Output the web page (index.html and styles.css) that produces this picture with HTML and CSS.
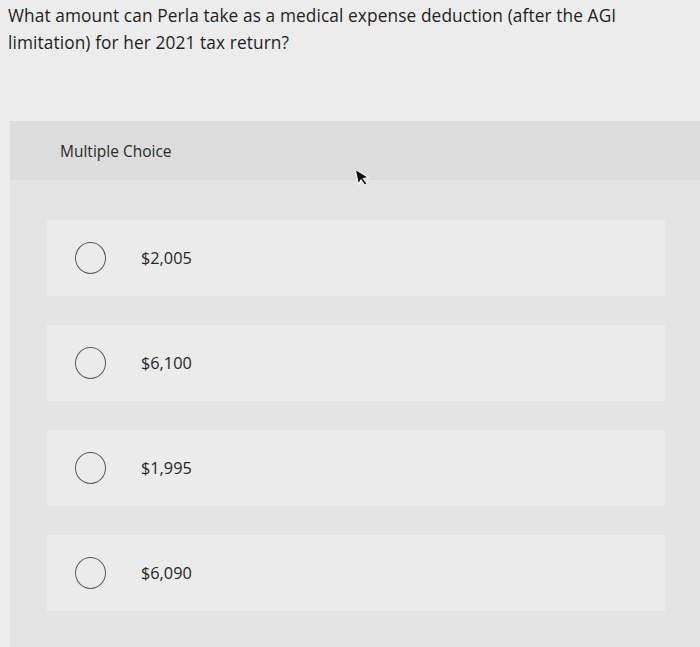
FILE: index.html
```html
<!DOCTYPE html>
<html lang="en">
<head>
<meta charset="utf-8">
<title>Multiple Choice</title>
<link rel="stylesheet" href="styles.css">
</head>
<body>
<p class="question">What amount can Perla take as a medical expense deduction (after the AGI limitation) for her 2021 tax return?</p>
<section class="panel">
  <div class="panel-header">Multiple Choice</div>
  <div class="panel-body">
    <label class="option"><span class="radio"></span><span class="answer">$2,005</span></label>
    <label class="option"><span class="radio"></span><span class="answer">$6,100</span></label>
    <label class="option"><span class="radio"></span><span class="answer">$1,995</span></label>
    <label class="option"><span class="radio"></span><span class="answer">$6,090</span></label>
  </div>
  <svg class="cursor" width="14" height="20" viewBox="0 0 14 20"><path d="M1 1 L1 16 L4.5 12.5 L7 18.5 L9.5 17.5 L7 11.5 L12 11.5 Z" fill="#111" stroke="#fff" stroke-width="1"/></svg>
</section>
</body>
</html>
```
FILE: styles.css
```css
html, body {
  margin: 0;
  padding: 0;
}
body {
  background: #ececec;
  font-family: "Open Sans", "Liberation Sans", sans-serif;
  color: #222;
  width: 700px;
  height: 647px;
  overflow: hidden;
}
.question {
  margin: 0;
  padding: 2px 0 0 8px;
  max-width: 660px;
  font-size: 17.3px;
  font-weight: 500;
  line-height: 27px;
  letter-spacing: 0.1px;
  color: #1e1e1e;
}
.panel {
  position: relative;
  margin: 65px 0 0 10px;
  background: #e3e3e3;
  height: 540px;
}
.panel-header {
  height: 59px;
  display: flex;
  align-items: center;
  padding-left: 50px;
  background: #dcdcdc;
  font-size: 15.5px;
  font-weight: 500;
  color: #2a2a2a;
}
.panel-body {
  display: flex;
  flex-direction: column;
  gap: 29px;
  padding: 40px 35px 0 37px;
}
.option {
  height: 76px;
  display: flex;
  align-items: center;
  padding-left: 28px;
  background: #ebebeb;
}
.radio {
  width: 29px;
  height: 30px;
  border: 1.6px solid #5a5a5a;
  border-radius: 50%;
  flex: none;
}
.answer {
  margin-left: 35px;
  font-size: 16.3px;
  font-weight: 500;
  color: #262626;
}
.cursor {
  position: absolute;
  left: 346px;
  top: 46px;
  transform: rotate(-12deg);
}
```
